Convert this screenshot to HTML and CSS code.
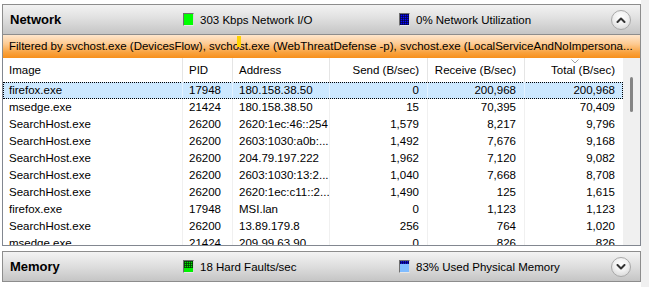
FILE: index.html
```html
<!DOCTYPE html>
<html lang="en">
<head>
<meta charset="utf-8">
<title>Resource Monitor - Network</title>
<link rel="stylesheet" href="styles.css">
</head>
<body>
<div class="window">
  <div class="main">
    <section class="panel">
      <div class="bar">
        <span class="title">Network</span>
        <span class="stat stat-wide"><i class="sw sw-green"></i>303 Kbps Network I/O</span>
        <span class="stat"><i class="sw sw-blue"></i>0% Network Utilization</span>
        <span class="toggle">
          <svg width="10" height="6" viewBox="0 0 10 6"><path d="M1.5 5 L5 1.5 L8.5 5" fill="none" stroke="#333" stroke-width="2" stroke-linecap="round" stroke-linejoin="round"/></svg>
        </span>
      </div>
      <div class="filter">Filtered by svchost.exe (DevicesFlow), svchost.exe (WebThreatDefense -p), svchost.exe (LocalServiceAndNoImpersona...<span class="marker"></span></div>
      <div class="grid">
        <div class="list">
          <div class="row head">
            <div class="c">Image</div>
            <div class="c">PID</div>
            <div class="c">Address</div>
            <div class="c r">Send (B/sec)</div>
            <div class="c r">Receive (B/sec)</div>
            <div class="c r sorted">Total (B/sec)<svg class="sort" width="8" height="5" viewBox="0 0 8 5"><path d="M0.5 0.5 L4 4 L7.5 0.5" fill="none" stroke="#a3a3a3" stroke-width="1"/></svg></div>
          </div>
          <div class="rows">
            <div class="row sel"><div class="c">firefox.exe</div><div class="c">17948</div><div class="c">180.158.38.50</div><div class="c r">0</div><div class="c r">200,968</div><div class="c r">200,968</div></div>
            <div class="row"><div class="c">msedge.exe</div><div class="c">21424</div><div class="c">180.158.38.50</div><div class="c r">15</div><div class="c r">70,395</div><div class="c r">70,409</div></div>
            <div class="row"><div class="c">SearchHost.exe</div><div class="c">26200</div><div class="c">2620:1ec:46::254</div><div class="c r">1,579</div><div class="c r">8,217</div><div class="c r">9,796</div></div>
            <div class="row"><div class="c">SearchHost.exe</div><div class="c">26200</div><div class="c">2603:1030:a0b:...</div><div class="c r">1,492</div><div class="c r">7,676</div><div class="c r">9,168</div></div>
            <div class="row"><div class="c">SearchHost.exe</div><div class="c">26200</div><div class="c">204.79.197.222</div><div class="c r">1,962</div><div class="c r">7,120</div><div class="c r">9,082</div></div>
            <div class="row"><div class="c">SearchHost.exe</div><div class="c">26200</div><div class="c">2603:1030:13:2...</div><div class="c r">1,040</div><div class="c r">7,668</div><div class="c r">8,708</div></div>
            <div class="row"><div class="c">SearchHost.exe</div><div class="c">26200</div><div class="c">2620:1ec:c11::2...</div><div class="c r">1,490</div><div class="c r">125</div><div class="c r">1,615</div></div>
            <div class="row"><div class="c">firefox.exe</div><div class="c">17948</div><div class="c">MSI.lan</div><div class="c r">0</div><div class="c r">1,123</div><div class="c r">1,123</div></div>
            <div class="row"><div class="c">SearchHost.exe</div><div class="c">26200</div><div class="c">13.89.179.8</div><div class="c r">256</div><div class="c r">764</div><div class="c r">1,020</div></div>
            <div class="row"><div class="c">msedge.exe</div><div class="c">21424</div><div class="c">209.99.63.90</div><div class="c r">0</div><div class="c r">826</div><div class="c r">826</div></div>
          </div>
        </div>
        <div class="vscroll"><div class="thumb"></div></div>
      </div>
    </section>
    <section class="panel mem">
      <div class="bar">
        <span class="title">Memory</span>
        <span class="stat stat-wide"><i class="sw sw-faults"></i>18 Hard Faults/sec</span>
        <span class="stat"><i class="sw sw-mem"></i>83% Used Physical Memory</span>
        <span class="toggle">
          <svg width="10" height="6" viewBox="0 0 10 6"><path d="M1.5 1 L5 4.5 L8.5 1" fill="none" stroke="#333" stroke-width="2" stroke-linecap="round" stroke-linejoin="round"/></svg>
        </span>
      </div>
    </section>
  </div>
  <div class="strip"></div>
</div>
</body>
</html>
```
FILE: styles.css
```css
* { box-sizing: border-box; }
html, body { margin: 0; padding: 0; }
body {
  background: #ffffff;
  font-family: "Liberation Sans", Arial, sans-serif;
  font-size: 11.5px;
  color: #000;
  width: 649px;
  height: 287px;
  overflow: hidden;
}
.window { display: flex; height: 287px; }
.main { width: 641px; padding: 4px 0 0 2px; }
.strip { width: 8px; background: #f0f0f0; }

.panel { width: 639px; }
.mem { margin-top: 5px; }

.bar {
  height: 31px;
  border: 1px solid #8d8d8d;
  background: linear-gradient(to bottom, #f3f3f3 0%, #e0e0e0 45%, #c5c5c5 100%);
  display: flex;
  align-items: center;
  padding-left: 7px;
  padding-right: 9px;
}
.title { width: 173px; font-weight: bold; font-size: 13px; }
.stat { display: flex; align-items: center; }
.stat-wide { width: 216px; }
.sw {
  display: inline-block;
  width: 11px;
  height: 13px;
  margin-right: 6px;
  border: 1px solid #6e6e6e;
  border-right-color: #d8d8d8;
  border-bottom-color: #e6e6e6;
}
.sw-green { background: #00ff00; }
.sw-blue {
  background-color: #0a0aff;
  background-image:
    linear-gradient(90deg, rgba(0,0,40,0.6) 1px, transparent 1px),
    linear-gradient(rgba(0,0,40,0.6) 1px, transparent 1px);
  background-size: 2px 2px;
}
.sw-faults {
  background-color: #00e400;
  background-image:
    linear-gradient(to bottom, transparent 0, transparent 7px, #00f000 7px),
    linear-gradient(90deg, rgba(0,60,0,0.8) 1px, transparent 1px),
    linear-gradient(rgba(0,60,0,0.8) 1px, transparent 1px);
  background-size: 100% 100%, 2px 2px, 2px 2px;
  background-repeat: no-repeat, repeat, repeat;
}
.sw-mem {
  background-color: #7fbaff;
  background-image:
    linear-gradient(to bottom, transparent 0, transparent 3px, #80bcff 3px),
    linear-gradient(90deg, rgba(0,0,60,0.7) 1px, transparent 1px),
    linear-gradient(#1a1ad0 1px, #0000b0 1px);
  background-size: 100% 100%, 2px 2px, 2px 2px;
  background-repeat: no-repeat, repeat, repeat;
}
.toggle {
  margin-left: auto;
  width: 20px;
  height: 20px;
  border-radius: 50%;
  border: 1px solid #a9a9a9;
  background: radial-gradient(circle at 50% 35%, #ffffff 0%, #f1f1f1 45%, #cfcfcf 100%);
  display: flex;
  align-items: center;
  justify-content: center;
}
.toggle svg { display: block; }

.filter {
  position: relative;
  height: 23px;
  line-height: 23px;
  padding-left: 6px;
  border-left: 1px solid #8d8d8d;
  border-right: 1px solid #8d8d8d;
  background: linear-gradient(to bottom, #fee6cd 0%, #fdc98f 40%, #f9a340 75%, #f7901c 100%);
  white-space: nowrap;
  overflow: hidden;
}
.marker {
  position: absolute;
  left: 234px;
  top: 1px;
  width: 4px;
  height: 11px;
  background: #ffd200;
}

.grid {
  height: 188px;
  border: 1px solid #828790;
  border-top: none;
  display: flex;
  background: #fff;
}
.list { width: 620px; display: flex; flex-direction: column; overflow: hidden; }
.rows { flex: 1; overflow: hidden; }
.row {
  display: grid;
  grid-template-columns: 180px 50px 97px 98px 97px 98px;
  height: 17px;
  line-height: 17px;
  white-space: nowrap;
  flex-shrink: 0;
}
.row .c {
  padding: 0 8px 0 6px;
  border-right: 1px solid #f0f0f0;
  overflow: hidden;
}
.row .c.r { text-align: right; }
.row .c:last-child { border-right: none; }
.head { height: 24px; line-height: 25px; }
.head .c { border-right-color: #e5e5e5; position: relative; overflow: visible; }
.sort { position: absolute; left: 46px; top: 1px; display: block; }
.sel { background: #cce8ff; outline: 1px dotted #000; outline-offset: -1px; }
.sel .c { border-right-color: #e2f1ff; }

.vscroll { flex: 1; background: #f0f0f0; padding-left: 7px; padding-top: 19px; }
.thumb { width: 3px; height: 35px; background: #858585; border-radius: 2px; }
```
